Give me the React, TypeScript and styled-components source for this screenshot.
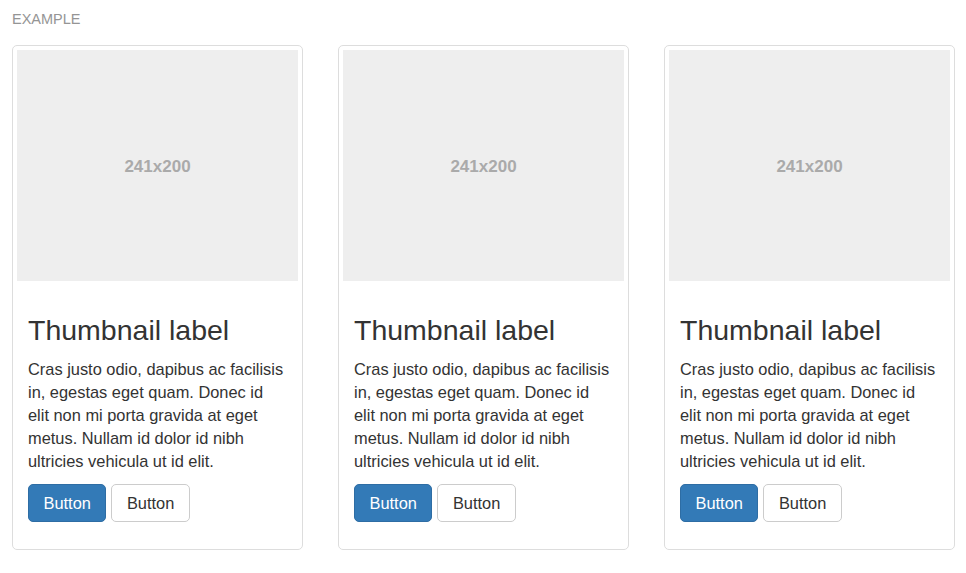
import React from 'react';
import styled, { createGlobalStyle } from 'styled-components';

const GlobalStyle = createGlobalStyle`
  html, body {
    margin: 0;
    padding: 0;
    background: #fff;
  }
  body {
    font-family: "Liberation Sans", Arial, Helvetica, sans-serif;
    color: #333;
  }
`;

const TEXT_LINES = [
  'Cras justo odio, dapibus ac facilisis',
  'in, egestas eget quam. Donec id',
  'elit non mi porta gravida at eget',
  'metus. Nullam id dolor id nibh',
  'ultricies vehicula ut id elit.',
];

const items = [1, 2, 3];

const App: React.FC = () => {
  return (
    <Page>
      <GlobalStyle />
      <ExampleLabel>Example</ExampleLabel>
      <Grid>
        {items.map(i => (
          <Thumbnail key={i}>
            <Placeholder>241x200</Placeholder>
            <Caption>
              <Title>Thumbnail label</Title>
              <Text>
                {TEXT_LINES.map((line, idx) => (
                  <React.Fragment key={idx}>
                    {line}
                    {idx < TEXT_LINES.length - 1 && <br />}
                  </React.Fragment>
                ))}
              </Text>
              <Actions>
                <Button $primary>Button</Button>
                <Button>Button</Button>
              </Actions>
            </Caption>
          </Thumbnail>
        ))}
      </Grid>
    </Page>
  );
};

export default App;

const Page = styled.div`
  padding: 11px 11px 0 12px;
`;

const ExampleLabel = styled.div`
  font-size: 14.5px;
  line-height: 16px;
  color: #959595;
  text-transform: uppercase;
  margin-bottom: 18px;
`;

const Grid = styled.div`
  display: grid;
  grid-template-columns: repeat(3, 291px);
  column-gap: 35px;
`;

const Thumbnail = styled.div`
  border: 1px solid #ddd;
  border-radius: 5px;
  padding: 4px;
  background: #fff;
`;

const Placeholder = styled.div`
  height: 231px;
  background: #eee;
  display: flex;
  align-items: center;
  justify-content: center;
  padding-top: 2px;
  box-sizing: border-box;
  color: #aaa;
  font-weight: 700;
  font-size: 17px;
`;

const Caption = styled.div`
  padding: 10px 10px 10px 11px;
`;

const Title = styled.h3`
  margin: 24px 0 13px;
  font-size: 28.5px;
  line-height: 30px;
  font-weight: 400;
  color: #333;
`;

const Text = styled.p`
  margin: 0 0 11px;
  font-size: 16.4px;
  line-height: 23px;
  color: #333;
`;

const Actions = styled.div`
  display: flex;
  gap: 5px;
  margin: 5px 0 13px;
`;

const Button = styled.button<{ $primary?: boolean }>`
  font-family: inherit;
  font-size: 16.4px;
  line-height: 22px;
  padding: 7px 14.5px;
  border-radius: 5px;
  border: 1px solid ${p => (p.$primary ? '#2e6da4' : '#ccc')};
  background: ${p => (p.$primary ? '#337ab7' : '#fff')};
  color: ${p => (p.$primary ? '#fff' : '#333')};
  cursor: pointer;
`;
